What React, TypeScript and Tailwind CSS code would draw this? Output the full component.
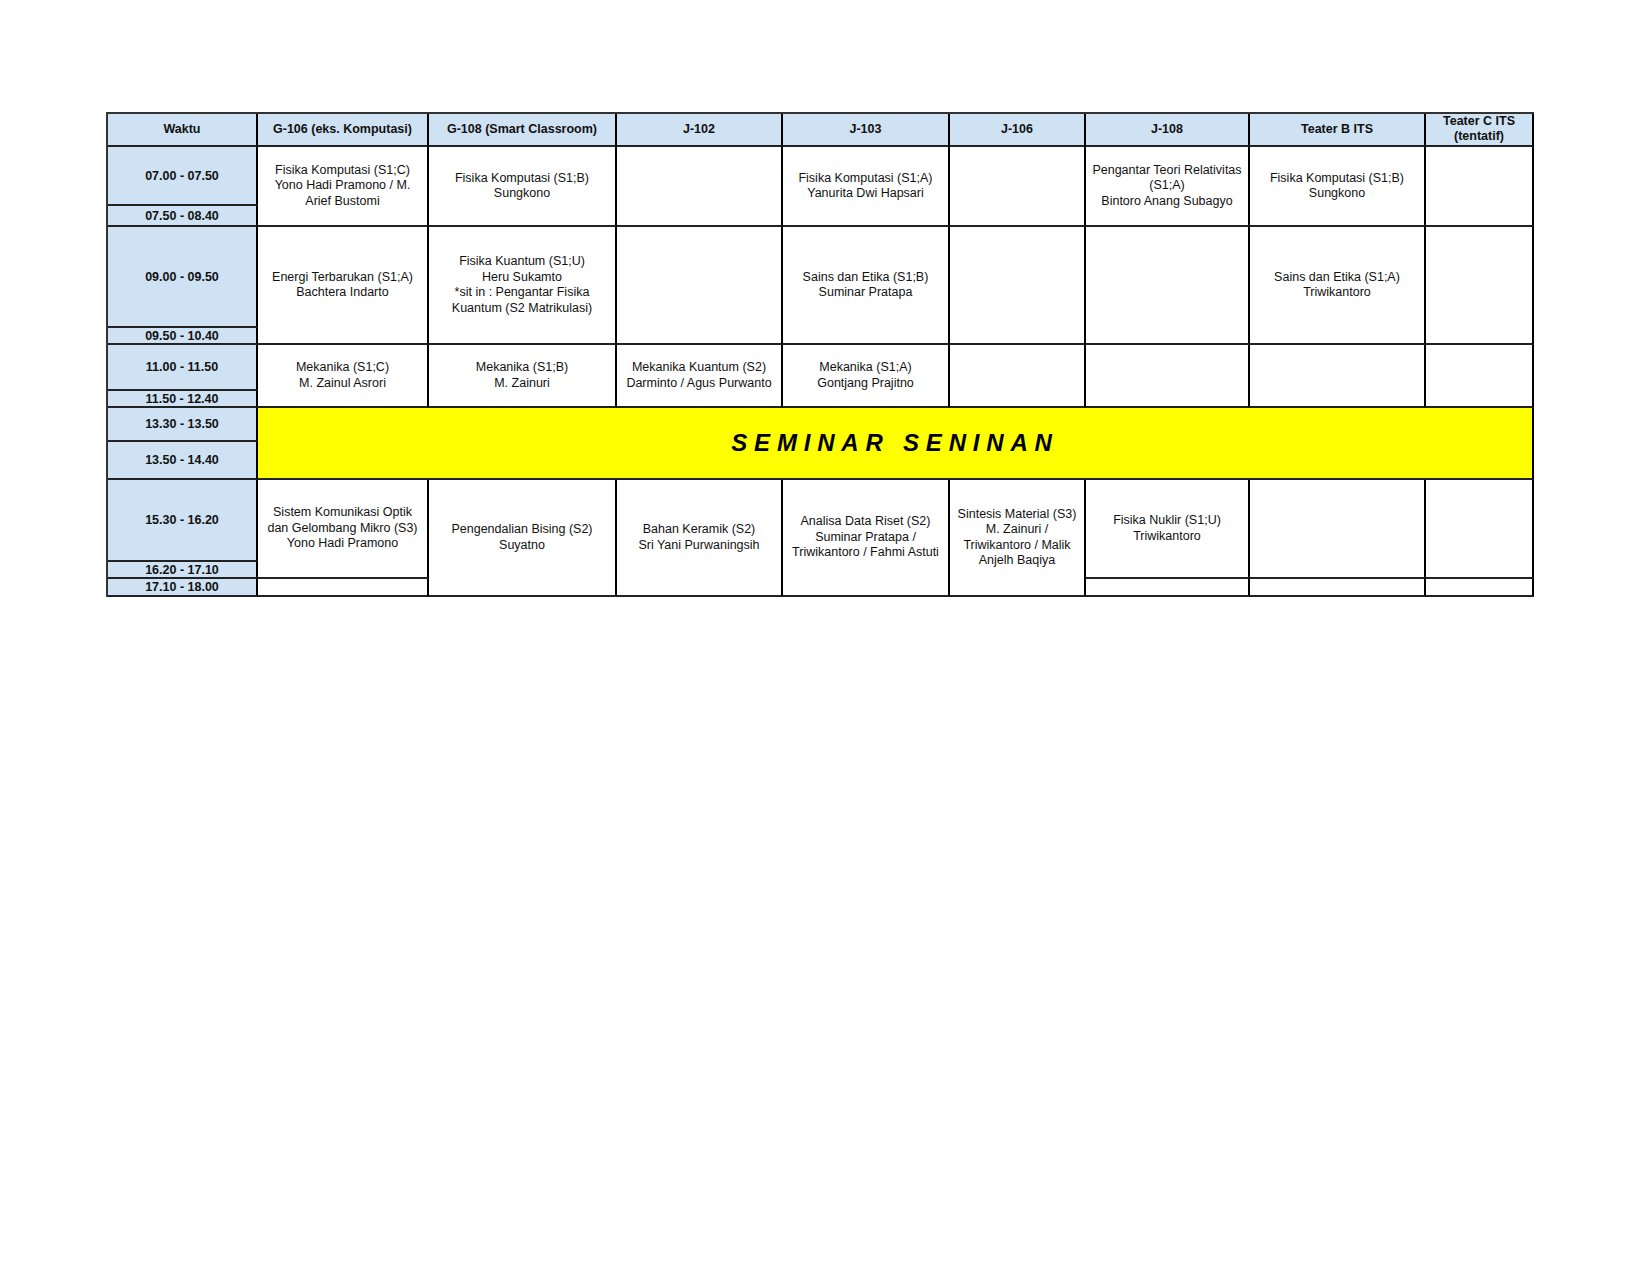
type Cell = {
  lines?: string[];
  span?: string;
  kind?: "time" | "head" | "body" | "seminar";
};

const font = { fontFamily: '"Liberation Sans", Arial, sans-serif' };

const headers: string[][] = [
  ["Waktu"],
  ["G-106 (eks. Komputasi)"],
  ["G-108 (Smart Classroom)"],
  ["J-102"],
  ["J-103"],
  ["J-106"],
  ["J-108"],
  ["Teater B ITS"],
  ["Teater C ITS", "(tentatif)"],
];

const t = (label: string): Cell => ({ kind: "time", lines: [label] });
const c = (lines: string[] = [], span = "row-span-2"): Cell => ({ kind: "body", lines, span });

const cells: Cell[] = [
  ...headers.map((h) => ({ kind: "head" as const, lines: h })),

  t("07.00 - 07.50"),
  c(["Fisika Komputasi (S1;C)", "Yono Hadi Pramono / M.", "Arief Bustomi"]),
  c(["Fisika Komputasi (S1;B)", "Sungkono"]),
  c(),
  c(["Fisika Komputasi (S1;A)", "Yanurita Dwi Hapsari"]),
  c(),
  c(["Pengantar Teori Relativitas", "(S1;A)", "Bintoro Anang Subagyo"]),
  c(["Fisika Komputasi (S1;B)", "Sungkono"]),
  c(),
  t("07.50 - 08.40"),

  t("09.00 - 09.50"),
  c(["Energi Terbarukan (S1;A)", "Bachtera Indarto"]),
  c(["Fisika Kuantum (S1;U)", "Heru Sukamto", "*sit in : Pengantar Fisika", "Kuantum (S2 Matrikulasi)"]),
  c(),
  c(["Sains dan Etika (S1;B)", "Suminar Pratapa"]),
  c(),
  c(),
  c(["Sains dan Etika (S1;A)", "Triwikantoro"]),
  c(),
  t("09.50 - 10.40"),

  t("11.00 - 11.50"),
  c(["Mekanika (S1;C)", "M. Zainul Asrori"]),
  c(["Mekanika (S1;B)", "M. Zainuri"]),
  c(["Mekanika Kuantum (S2)", "Darminto / Agus Purwanto"]),
  c(["Mekanika (S1;A)", "Gontjang Prajitno"]),
  c(),
  c(),
  c(),
  c(),
  t("11.50 - 12.40"),

  t("13.30 - 13.50"),
  { kind: "seminar", lines: ["SEMINAR SENINAN"], span: "col-span-8 row-span-2" },
  t("13.50 - 14.40"),

  t("15.30 - 16.20"),
  c(["Sistem Komunikasi Optik", "dan Gelombang Mikro (S3)", "Yono Hadi Pramono"]),
  c(["Pengendalian Bising (S2)", "Suyatno"], "row-span-3"),
  c(["Bahan Keramik (S2)", "Sri Yani Purwaningsih"], "row-span-3"),
  c(["Analisa Data Riset (S2)", "Suminar Pratapa /", "Triwikantoro / Fahmi Astuti"], "row-span-3"),
  c(["Sintesis Material (S3)", "M. Zainuri /", "Triwikantoro / Malik", "Anjelh Baqiya"], "row-span-3"),
  c(["Fisika Nuklir (S1;U)", "Triwikantoro"]),
  c(),
  c(),
  t("16.20 - 17.10"),
  t("17.10 - 18.00"),
  c([], ""),
  c([], ""),
  c([], ""),
  c([], ""),
];

function ScheduleCell({ cell }: { cell: Cell }) {
  const base =
    "flex flex-col items-center justify-center text-center border-r-2 border-b-2 border-r-black border-b-[#222]";

  if (cell.kind === "seminar") {
    return (
      <div className={`${base} ${cell.span} bg-[#ffff00]`}>
        <span className="text-[24px] font-bold italic tracking-[6.8px] text-black">SEMINAR SENINAN</span>
      </div>
    );
  }

  const tone =
    cell.kind === "time"
      ? "bg-[#cfe2f3] font-bold leading-[14px]"
      : cell.kind === "head"
        ? "bg-[#cfe2f3] font-bold leading-[15px] pb-[1px]"
        : "bg-white leading-[15.5px]";

  return (
    <div className={`${base} ${cell.span ?? ""} ${tone}`}>
      {cell.lines?.map((l, i) => (
        <div key={i} className="whitespace-nowrap">
          {l}
        </div>
      ))}
    </div>
  );
}

export default function App() {
  return (
    <div className="min-h-[1275px] w-[1650px] bg-white text-[12.5px] text-[#111]" style={font}>
      <div className="pl-[106px] pt-[112px]">
        <div className="grid w-max grid-cols-[150px_171px_188px_166px_167px_136px_164px_176px_108px] grid-rows-[33px_59px_21px_101px_17px_46px_17px_34px_38px_82px_17px_18px] border-l-2 border-t-2 border-l-[#333] border-t-[#333]">
          {cells.map((cell, i) => (
            <ScheduleCell key={i} cell={cell} />
          ))}
        </div>
      </div>
    </div>
  );
}
